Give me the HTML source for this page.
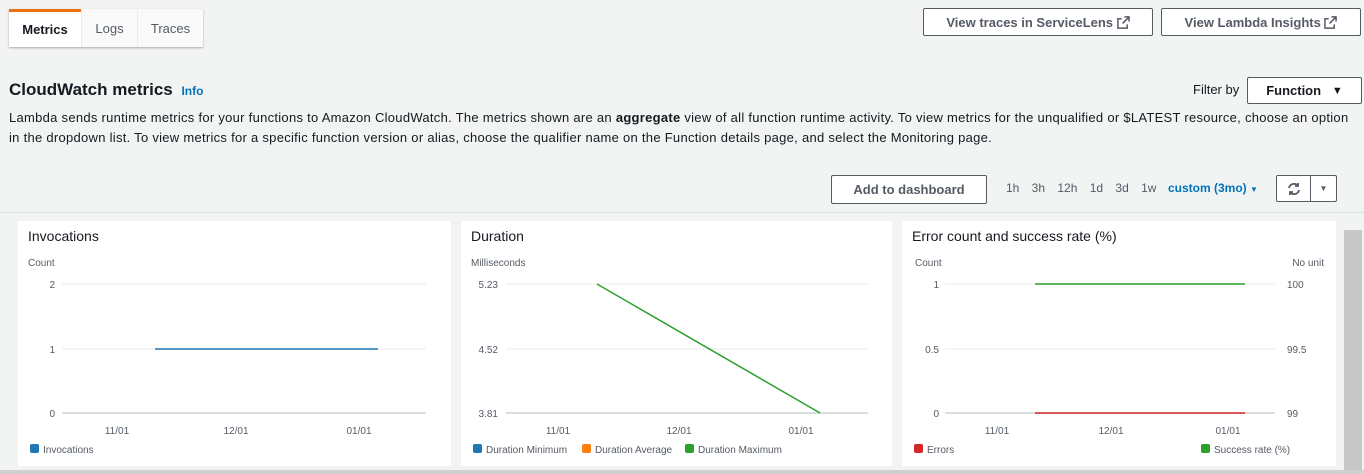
<!DOCTYPE html>
<html><head><style>
*{box-sizing:border-box;margin:0;padding:0}
body{width:1364px;height:474px;background:#f2f3f3;font-family:"Liberation Sans",sans-serif;color:#16191f;position:relative;overflow:hidden}
.a{position:absolute}
.tabs{left:9px;top:9px;width:194px;height:38px;background:#fafafa;box-shadow:0 1px 2px rgba(0,0,0,.3);display:flex;font-size:13px}
.tabs div{display:flex;align-items:center;justify-content:center;color:#545b64}
.btn{border:1px solid #545b64;background:#fff;border-radius:2px;font-weight:bold;font-size:13px;color:#545b64;display:flex;align-items:center;justify-content:center}
.panel{background:#fff;top:221px;height:245px}
svg text{font-family:"Liberation Sans",sans-serif;font-size:10px;fill:#545b64}
</style></head><body>
<div class="a tabs">
<div style="width:72px;background:#fff;border-top:3px solid #ec7211;font-weight:bold;color:#16191f">Metrics</div>
<div style="width:56px;border-left:1px solid #eaeded">Logs</div>
<div style="width:66px;border-left:1px solid #eaeded">Traces</div>
</div>
<div class="a btn" style="left:923px;top:8px;width:230px;height:28px">View traces in ServiceLens&nbsp;<svg width="13" height="13" viewBox="0 0 14 14"><path d="M8 1h5v5M13 1L6 8M11 9v4H1V3h4" fill="none" stroke="#545b64" stroke-width="1.6"/></svg></div>
<div class="a btn" style="left:1161px;top:8px;width:200px;height:28px">View Lambda Insights&nbsp;<svg width="13" height="13" viewBox="0 0 14 14"><path d="M8 1h5v5M13 1L6 8M11 9v4H1V3h4" fill="none" stroke="#545b64" stroke-width="1.6"/></svg></div>
<div class="a" style="left:9px;top:80px;font-size:17px;font-weight:bold">CloudWatch metrics <span style="font-size:12px;color:#0073bb;margin-left:4px">Info</span></div>
<div class="a" style="left:1193px;top:82px;font-size:13px;color:#16191f">Filter by</div>
<div class="a btn" style="left:1247px;top:77px;width:115px;height:27px;color:#16191f">Function&nbsp;&nbsp;&nbsp;<span style="font-size:11px">▼</span></div>
<div class="a" style="left:9px;top:108px;width:1360px;font-size:13px;line-height:20px;color:#16191f;letter-spacing:0.28px;white-space:nowrap">Lambda sends runtime metrics for your functions to Amazon CloudWatch. The metrics shown are an <b>aggregate</b> view of all function runtime activity. To view metrics for the unqualified or $LATEST resource, choose an option<br>in the dropdown list. To view metrics for a specific function version or alias, choose the qualifier name on the Function details page, and select the Monitoring page.</div>
<div class="a btn" style="left:831px;top:175px;width:156px;height:29px">Add to dashboard</div>
<div class="a" style="left:1006px;top:181px;font-size:12px;color:#545b64;word-spacing:9px">1h 3h 12h 1d 3d 1w</div>
<div class="a" style="left:1168px;top:181px;font-size:12px;color:#0073bb;font-weight:bold">custom (3mo) <span style="font-size:8px">▼</span></div>
<div class="a btn" style="left:1276px;top:175px;width:61px;height:27px;justify-content:flex-start">
<div style="width:34px;height:100%;border-right:1px solid #545b64;display:flex;align-items:center;justify-content:center"><svg width="14" height="14" viewBox="0 0 14 14"><path d="M2 6a5 5 0 0 1 9-2M12 8a5 5 0 0 1-9 2M11 1v3H8M3 13v-3h3" fill="none" stroke="#545b64" stroke-width="1.8"/></svg></div>
<div style="flex:1;text-align:center;font-size:8px">▼</div></div>
<div class="a" style="left:0;top:212px;width:1364px;height:1px;background:#dfe2e2"></div>
<div class="a" style="left:1344px;top:230px;width:18px;height:240px;background:#c8c8c8"></div>
<div class="a" style="left:0;top:470px;width:1364px;height:4px;background:#d0d0d0"></div>

<div class="a panel" style="left:18px;width:433px">
<svg width="433" height="245">
<text x="10" y="20" style="font-size:14px;fill:#16191f">Invocations</text>
<text x="10" y="45">Count</text>
<g stroke="#e9ebed"><line x1="44" y1="63" x2="408" y2="63"/><line x1="44" y1="128" x2="408" y2="128"/></g>
<line x1="44" y1="192" x2="408" y2="192" stroke="#cfd3d6" stroke-width="1.5"/>
<g text-anchor="end"><text x="37" y="67">2</text><text x="37" y="132">1</text><text x="37" y="196">0</text></g>
<line x1="137" y1="128" x2="360" y2="128" stroke="#1f77b4" stroke-width="1.5"/>
<g text-anchor="middle"><text x="99" y="213">11/01</text><text x="218" y="213">12/01</text><text x="341" y="213">01/01</text></g>
<rect x="12" y="223" width="9" height="9" rx="2" fill="#1f77b4"/><text x="25" y="232">Invocations</text>
</svg></div>

<div class="a panel" style="left:461px;width:431px">
<svg width="431" height="245">
<text x="10" y="20" style="font-size:14px;fill:#16191f">Duration</text>
<text x="10" y="45">Milliseconds</text>
<g stroke="#e9ebed"><line x1="45" y1="63" x2="407" y2="63"/><line x1="45" y1="128" x2="407" y2="128"/></g>
<line x1="45" y1="192" x2="407" y2="192" stroke="#cfd3d6" stroke-width="1.5"/>
<g text-anchor="end"><text x="37" y="67">5.23</text><text x="37" y="132">4.52</text><text x="37" y="196">3.81</text></g>
<line x1="136" y1="63" x2="359" y2="192" stroke="#2ca02c" stroke-width="1.5"/>
<g text-anchor="middle"><text x="97" y="213">11/01</text><text x="218" y="213">12/01</text><text x="340" y="213">01/01</text></g>
<rect x="12" y="223" width="9" height="9" rx="2" fill="#1f77b4"/><text x="25" y="232">Duration Minimum</text>
<rect x="121" y="223" width="9" height="9" rx="2" fill="#ff7f0e"/><text x="134" y="232">Duration Average</text>
<rect x="224" y="223" width="9" height="9" rx="2" fill="#2ca02c"/><text x="237" y="232">Duration Maximum</text>
</svg></div>

<div class="a panel" style="left:902px;width:434px">
<svg width="434" height="245">
<text x="10" y="20" style="font-size:14px;fill:#16191f">Error count and success rate (%)</text>
<text x="13" y="45">Count</text><text x="422" y="45" text-anchor="end">No unit</text>
<g stroke="#e9ebed"><line x1="43" y1="63" x2="373" y2="63"/><line x1="43" y1="128" x2="373" y2="128"/></g>
<line x1="43" y1="192" x2="373" y2="192" stroke="#cfd3d6" stroke-width="1.5"/>
<g text-anchor="end"><text x="37" y="67">1</text><text x="37" y="132">0.5</text><text x="37" y="196">0</text></g>
<text x="385" y="67">100</text><text x="385" y="132">99.5</text><text x="385" y="196">99</text>
<line x1="133" y1="63" x2="343" y2="63" stroke="#2ca02c" stroke-width="1.5"/>
<line x1="133" y1="192" x2="343" y2="192" stroke="#d62728" stroke-width="1.5"/>
<g text-anchor="middle"><text x="95" y="213">11/01</text><text x="209" y="213">12/01</text><text x="326" y="213">01/01</text></g>
<rect x="12" y="223" width="9" height="9" rx="2" fill="#d62728"/><text x="25" y="232">Errors</text>
<rect x="299" y="223" width="9" height="9" rx="2" fill="#2ca02c"/><text x="312" y="232">Success rate (%)</text>
</svg></div>
</body></html>
